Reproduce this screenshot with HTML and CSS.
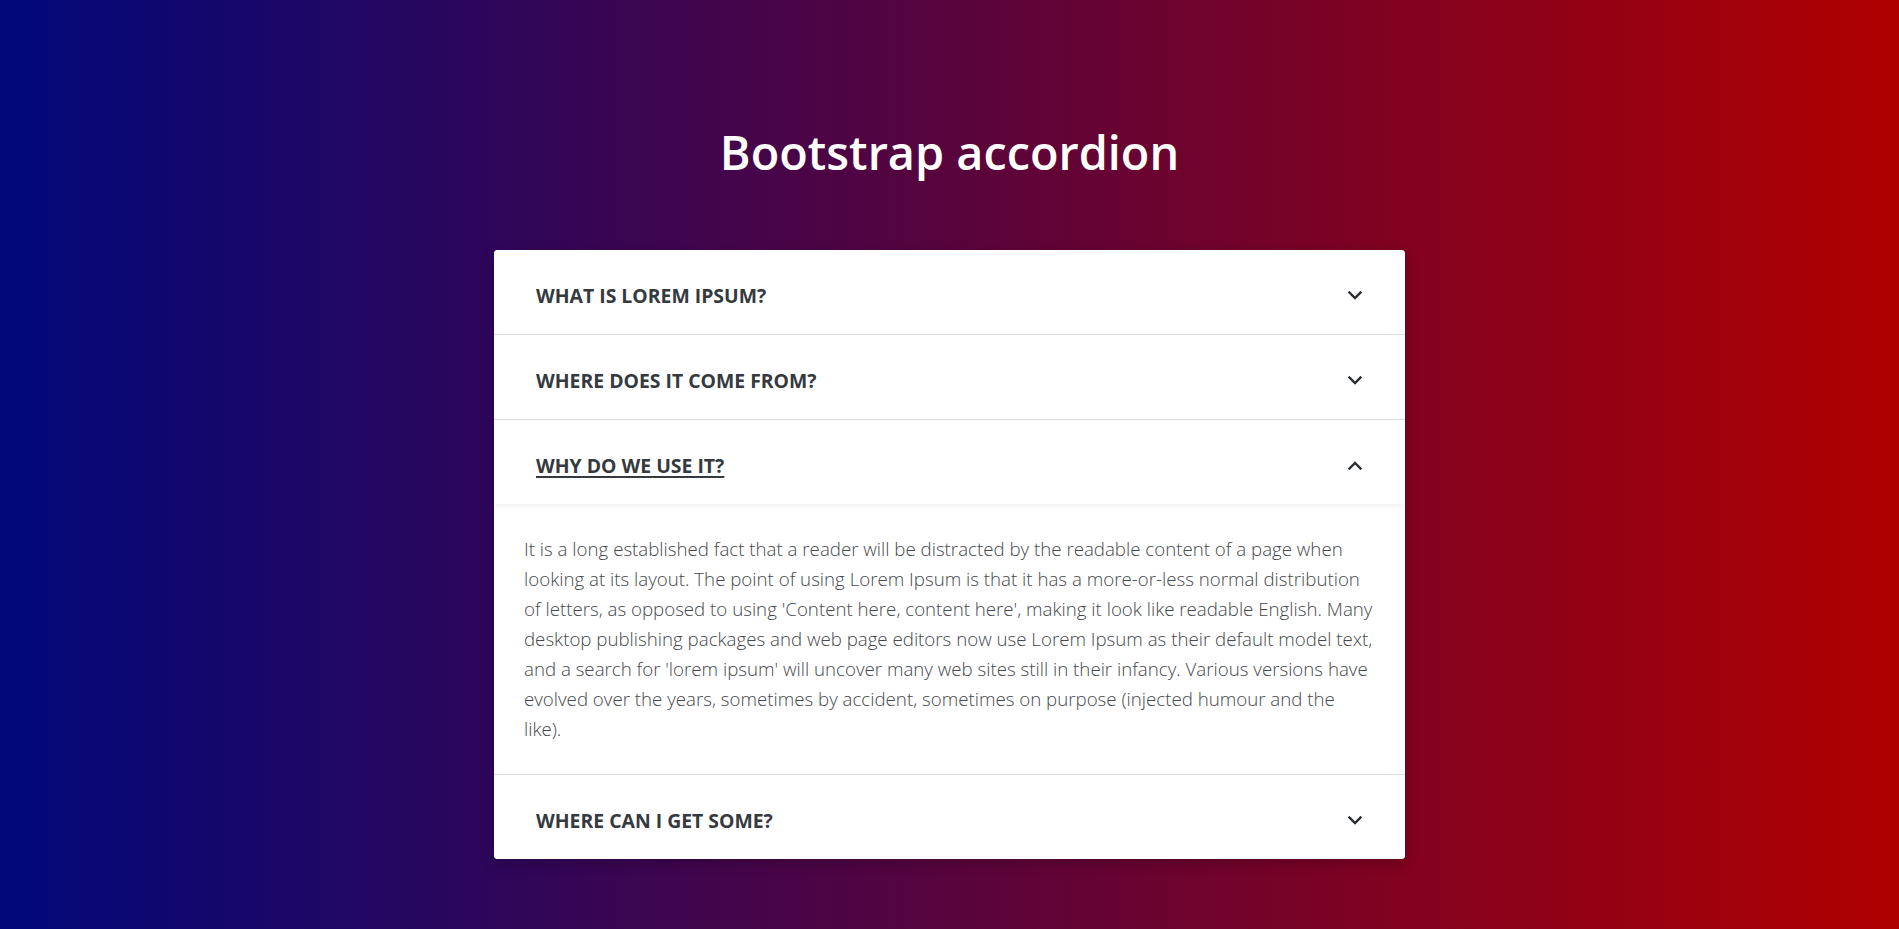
FILE: index.html
```html
<!DOCTYPE html>
<html lang="en">
<head>
<meta charset="utf-8">
<title>Bootstrap accordion</title>
<link rel="stylesheet" href="styles.css">
</head>
<body>
<main class="page">
  <h1 class="title">Bootstrap accordion</h1>
  <div class="accordion">
    <div class="item">
      <button class="header">
        <span class="label">What is Lorem Ipsum?</span>
        <svg class="chev" width="14" height="9" viewBox="0 0 14 9"><polyline points="1.5,1.5 7,7 12.5,1.5" fill="none" stroke="#2b2f33" stroke-width="2.4" stroke-linecap="square"/></svg>
      </button>
    </div>
    <div class="item">
      <button class="header">
        <span class="label">Where does it come from?</span>
        <svg class="chev" width="14" height="9" viewBox="0 0 14 9"><polyline points="1.5,1.5 7,7 12.5,1.5" fill="none" stroke="#2b2f33" stroke-width="2.4" stroke-linecap="square"/></svg>
      </button>
    </div>
    <div class="item open">
      <button class="header active">
        <span class="label">Why do we use it?</span>
        <svg class="chev" width="14" height="9" viewBox="0 0 14 9"><polyline points="1.5,7.5 7,2 12.5,7.5" fill="none" stroke="#2b2f33" stroke-width="2.4" stroke-linecap="square"/></svg>
      </button>
      <div class="body">
        <p>It is a long established fact that a reader will be distracted by the readable content of a page when looking at its layout. The point of using Lorem Ipsum is that it has a more-or-less normal distribution of letters, as opposed to using 'Content here, content here', making it look like readable English. Many desktop publishing packages and web page editors now use Lorem Ipsum as their default model text, and a search for 'lorem ipsum' will uncover many web sites still in their infancy. Various versions have evolved over the years, sometimes by accident, sometimes on purpose (injected humour and the like).</p>
      </div>
    </div>
    <div class="item">
      <button class="header">
        <span class="label">Where can I get some?</span>
        <svg class="chev" width="14" height="9" viewBox="0 0 14 9"><polyline points="1.5,1.5 7,7 12.5,1.5" fill="none" stroke="#2b2f33" stroke-width="2.4" stroke-linecap="square"/></svg>
      </button>
    </div>
  </div>
</main>
</body>
</html>
```

FILE: styles.css
```css
html, body {
  margin: 0;
  padding: 0;
}

body {
  min-height: 100vh;
  background: linear-gradient(to right, #00087a 0%, #b00000 100%);
  font-family: "Open Sans", "Noto Sans", "DejaVu Sans", sans-serif;
}

.page {
  display: flex;
  flex-direction: column;
  align-items: center;
  padding-top: 109px;
}

.title {
  margin: 0 0 55px 0;
  color: #ffffff;
  font-size: 46.8px;
  font-weight: 600;
  line-height: 86px;
  letter-spacing: 0;
}

.accordion {
  width: 911px;
  background: #ffffff;
  border-radius: 4px;
  box-shadow: 0 4px 14px rgba(0, 0, 0, 0.22);
  overflow: hidden;
}

.item + .item {
  border-top: 1px solid #dcdfe3;
}

.header {
  display: flex;
  align-items: center;
  justify-content: space-between;
  width: 100%;
  height: 84px;
  padding: 6px 43px 0 42px;
  margin: 0;
  border: 0;
  background: #ffffff;
  font-family: inherit;
  cursor: pointer;
  text-align: left;
}

.label {
  color: #343a40;
  font-size: 19.4px;
  font-weight: 700;
  text-transform: uppercase;
  letter-spacing: 0;
}

.header.active {
  position: relative;
  box-shadow: 0 2px 6px rgba(0, 0, 0, 0.07);
}

.header.active .label {
  text-decoration: underline;
  text-underline-offset: 3px;
  text-decoration-thickness: 2px;
}

.chev {
  display: block;
}

.body {
  padding: 30px 30px 30px 30px;
}

.body p {
  margin: 0;
  color: #45484d;
  font-size: 18.7px;
  font-weight: 300;
  line-height: 30px;
}
```
